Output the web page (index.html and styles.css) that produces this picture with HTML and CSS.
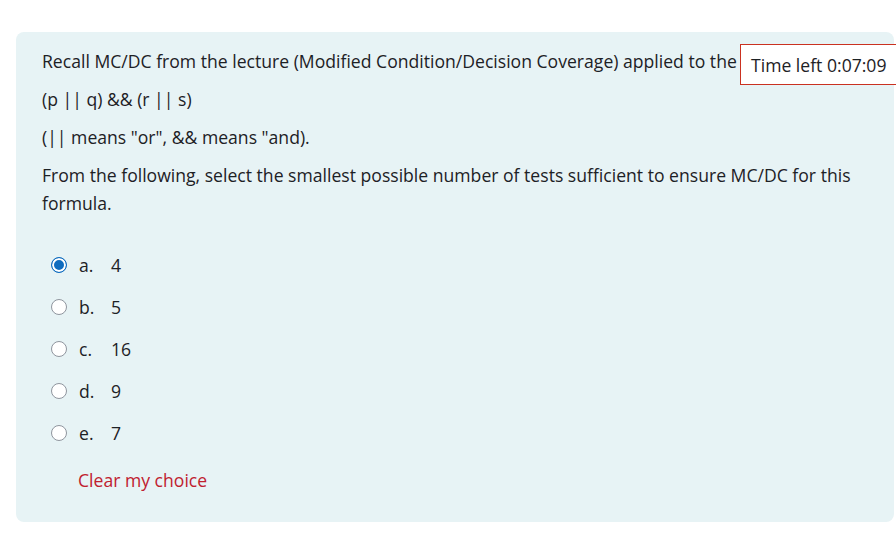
FILE: index.html
```html
<!DOCTYPE html>
<html>
<head>
<meta charset="utf-8" />
<title>Quiz question</title>
<link rel="stylesheet" href="styles.css">
</head>
<body>
<div class="timer">Time left 0:07:09</div>
<div class="que">
  <div class="qtext">
    <p>Recall MC/DC from the lecture (Modified Condition/Decision Coverage) applied to the formula:</p>
    <p>(p || q) &amp;&amp; (r || s)</p>
    <p>(|| means "or", &amp;&amp; means "and).</p>
    <p>From the following, select the smallest possible number of tests sufficient to ensure MC/DC for this formula.</p>
  </div>
  <div class="answer">
    <label class="option"><input type="radio" name="q1" checked><span class="num">a.</span><span>4</span></label>
    <label class="option"><input type="radio" name="q1"><span class="num">b.</span><span>5</span></label>
    <label class="option"><input type="radio" name="q1"><span class="num">c.</span><span>16</span></label>
    <label class="option"><input type="radio" name="q1"><span class="num">d.</span><span>9</span></label>
    <label class="option"><input type="radio" name="q1"><span class="num">e.</span><span>7</span></label>
  </div>
  <a class="clear" href="#">Clear my choice</a>
</div>
</body>
</html>
```

FILE: styles.css
```css
* {
  box-sizing: border-box;
}
body {
  margin: 0;
  padding: 32px 0 0 16px;
  background: #fff;
  color: #1d2125;
  font-family: 'Open Sans', Arial, sans-serif;
  font-size: 17.6px;
  overflow: hidden;
}
.que {
  background-color: #e7f3f5;
  border-radius: 8px;
  width: 878px;
  height: 490px;
  padding: 15px 26px;
}
.qtext p {
  margin: 0 0 10px;
  line-height: 28px;
}
.answer {
  margin-top: 27px;
  padding-left: 9px;
}
.option {
  display: flex;
  align-items: center;
  height: 42px;
}
.option input {
  appearance: none;
  -webkit-appearance: none;
  width: 16px;
  height: 16px;
  margin: 0 12px 0 0;
  border: 1.5px solid #8f959e;
  border-radius: 50%;
  background: #fff;
}
.option input:checked {
  border: 1.5px solid #0f6cbf;
  background: #0f6cbf;
  box-shadow: inset 0 0 0 2px #fff;
}
.option .num {
  width: 32px;
}
.clear {
  display: inline-block;
  margin: 14px 0 0 36px;
  color: #c0202f;
  text-decoration: none;
}
.timer {
  position: fixed;
  top: 44px;
  left: 740px;
  width: 170px;
  height: 41px;
  padding: 0 10px;
  display: flex;
  align-items: center;
  background: #fff;
  border: 1px solid #ca3120;
}
```
